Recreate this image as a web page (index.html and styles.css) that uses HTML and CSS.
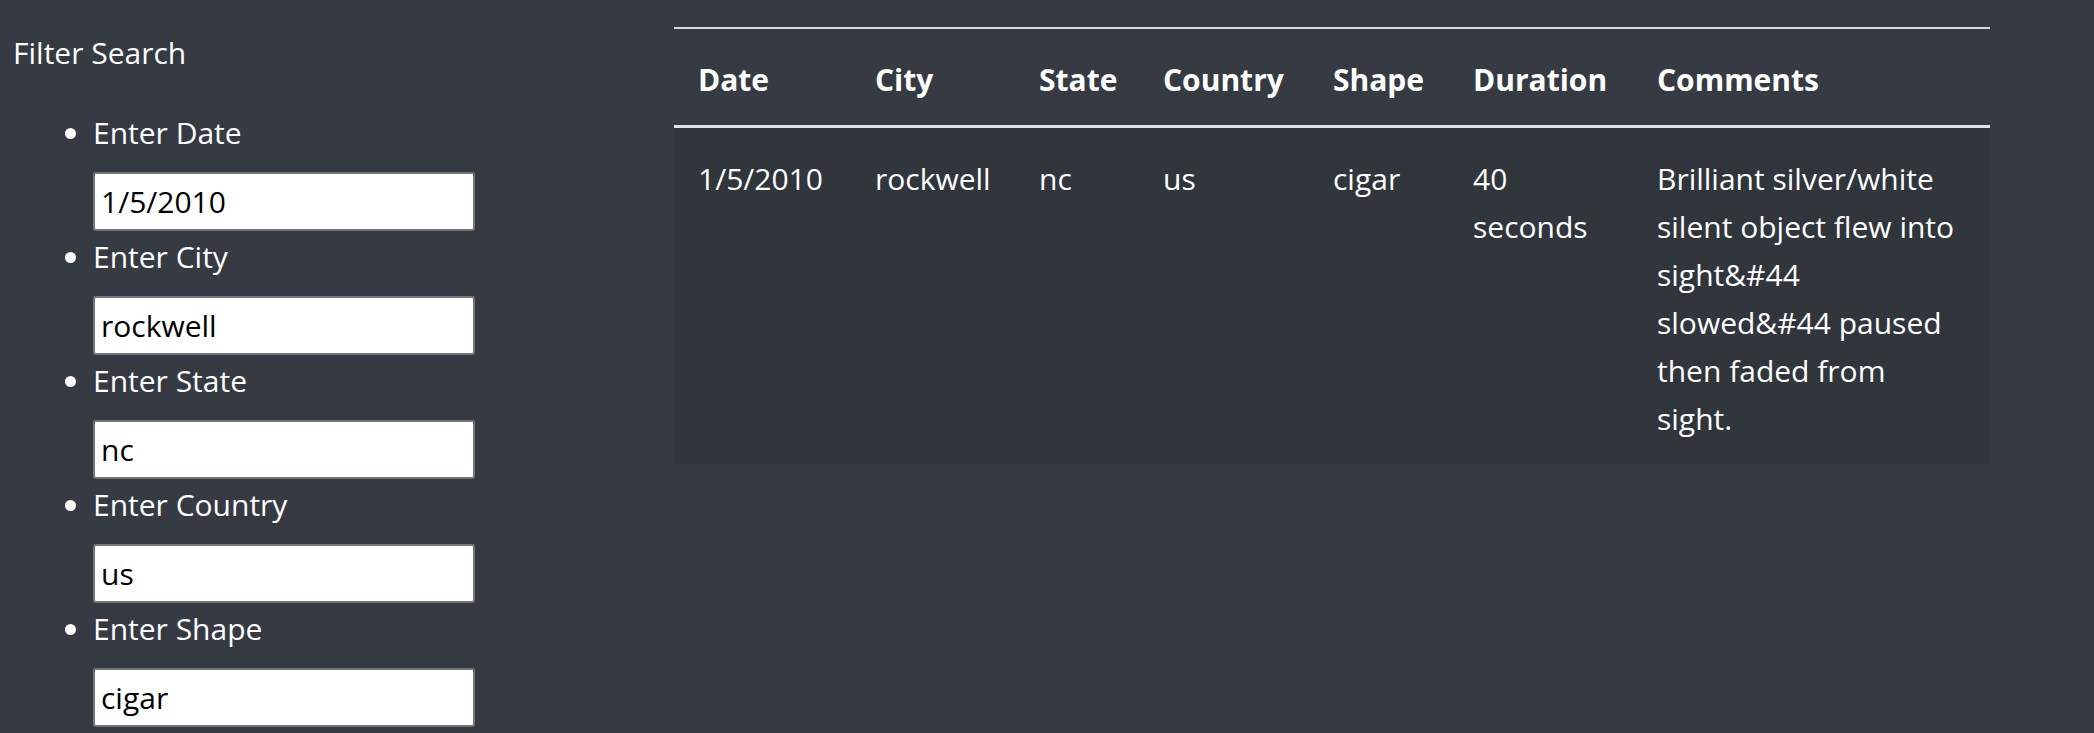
FILE: index.html
```html
<!DOCTYPE html>
<html lang="en">
<head>
<meta charset="utf-8">
<title>UFO Sightings</title>
<link rel="stylesheet" href="styles.css">
</head>
<body>
<div class="layout">
  <aside class="sidebar">
    <div class="filter-title">Filter Search</div>
    <ul class="filters">
      <li class="filter">
        <label class="filter-label" for="datetime">Enter Date</label>
        <input class="filter-input" id="datetime" type="text" value="1/5/2010">
      </li>
      <li class="filter">
        <label class="filter-label" for="city">Enter City</label>
        <input class="filter-input" id="city" type="text" value="rockwell">
      </li>
      <li class="filter">
        <label class="filter-label" for="state">Enter State</label>
        <input class="filter-input" id="state" type="text" value="nc">
      </li>
      <li class="filter">
        <label class="filter-label" for="country">Enter Country</label>
        <input class="filter-input" id="country" type="text" value="us">
      </li>
      <li class="filter">
        <label class="filter-label" for="shape">Enter Shape</label>
        <input class="filter-input" id="shape" type="text" value="cigar">
      </li>
    </ul>
  </aside>
  <main class="content">
    <table class="ufo-table">
      <colgroup>
        <col class="c-date">
        <col class="c-city">
        <col class="c-state">
        <col class="c-country">
        <col class="c-shape">
        <col class="c-duration">
        <col class="c-comments">
      </colgroup>
      <thead>
        <tr>
          <th>Date</th>
          <th>City</th>
          <th>State</th>
          <th>Country</th>
          <th>Shape</th>
          <th>Duration</th>
          <th>Comments</th>
        </tr>
      </thead>
      <tbody>
        <tr>
          <td>1/5/2010</td>
          <td>rockwell</td>
          <td>nc</td>
          <td>us</td>
          <td>cigar</td>
          <td>40 seconds</td>
          <td>Brilliant silver/white silent object flew into sight&amp;#44 slowed&amp;#44 paused then faded from sight.</td>
        </tr>
      </tbody>
    </table>
  </main>
</div>
</body>
</html>
```

FILE: styles.css
```css
html, body {
  margin: 0;
  padding: 0;
}

body {
  background: #363a42;
  color: #ffffff;
  font-family: "Open Sans", "Noto Sans", "Liberation Sans", sans-serif;
  font-size: 30px;
  line-height: 48px;
}

.layout {
  display: flex;
  align-items: flex-start;
}

.sidebar {
  flex: 0 0 661px;
  padding: 29px 0 0 13px;
}

.filter-title {
  height: 48px;
}

.filters {
  list-style: disc;
  margin: 32px 0 0 0;
  padding: 0 0 0 80px;
}

.filter::marker {
  font-size: 30px;
}

.filter-label {
  display: block;
}

.filter-input {
  display: block;
  box-sizing: border-box;
  width: 382px;
  height: 59px;
  margin: 15px 0 2px 0;
  padding: 0 6px;
  border: 2.5px solid #767676;
  border-radius: 3px;
  background: #ffffff;
  color: #000000;
  font-family: inherit;
  font-size: 30px;
  line-height: 48px;
}

.content {
  flex: 0 0 1316px;
  padding-top: 27px;
}

.ufo-table {
  width: 1316px;
  border-collapse: collapse;
  table-layout: fixed;
}

.c-date { width: 177px; }
.c-city { width: 164px; }
.c-state { width: 124px; }
.c-country { width: 170px; }
.c-shape { width: 140px; }
.c-duration { width: 184px; }
.c-comments { width: 357px; }

.ufo-table th,
.ufo-table td {
  padding: 27px 24px 21px 24px;
  text-align: left;
  vertical-align: top;
}

.ufo-table th {
  font-weight: 700;
  border-top: 2px solid #d5d9dd;
  border-bottom: 3px solid #dee2e6;
}

.ufo-table tbody tr {
  background: #31353c;
}
```
